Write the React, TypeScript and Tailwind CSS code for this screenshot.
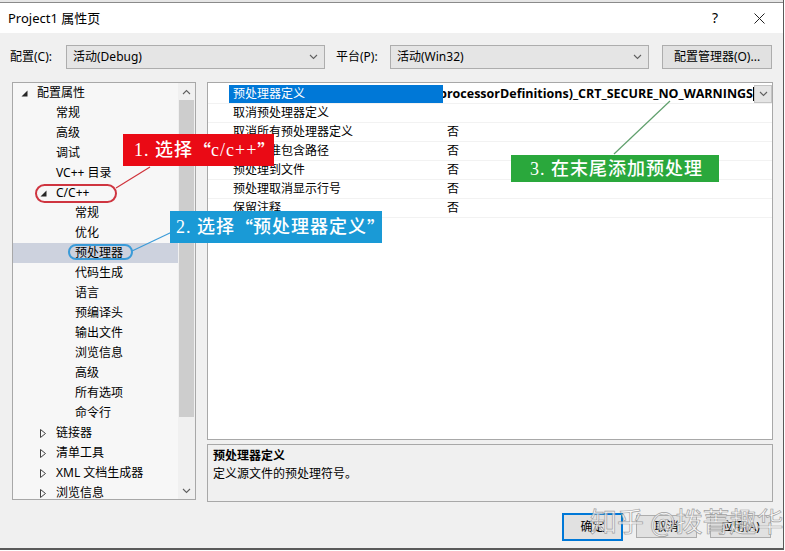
import React from 'react'

type TreeItem = {
  label: string
  level: number
  arrow?: 'open' | 'closed'
  selected?: boolean
}

const treeItems: TreeItem[] = [
  { label: '配置属性', level: 0, arrow: 'open' },
  { label: '常规', level: 1 },
  { label: '高级', level: 1 },
  { label: '调试', level: 1 },
  { label: 'VC++ 目录', level: 1 },
  { label: 'C/C++', level: 1, arrow: 'open' },
  { label: '常规', level: 2 },
  { label: '优化', level: 2 },
  { label: '预处理器', level: 2, selected: true },
  { label: '代码生成', level: 2 },
  { label: '语言', level: 2 },
  { label: '预编译头', level: 2 },
  { label: '输出文件', level: 2 },
  { label: '浏览信息', level: 2 },
  { label: '高级', level: 2 },
  { label: '所有选项', level: 2 },
  { label: '命令行', level: 2 },
  { label: '链接器', level: 1, arrow: 'closed' },
  { label: '清单工具', level: 1, arrow: 'closed' },
  { label: 'XML 文档生成器', level: 1, arrow: 'closed' },
  { label: '浏览信息', level: 1, arrow: 'closed' },
]

const gridRows = [
  { name: '取消预处理器定义', value: '' },
  { name: '取消所有预处理器定义', value: '否' },
  { name: '忽略标准包含路径', value: '否' },
  { name: '预处理到文件', value: '否' },
  { name: '预处理取消显示行号', value: '否' },
  { name: '保留注释', value: '否' },
]

const indent = ['pl-[8px]', 'pl-[27px]', 'pl-[46px]']

const Chevron = ({ up = false }: { up?: boolean }) => (
  <svg width="9" height="6" viewBox="0 0 9 6" className={up ? 'rotate-180' : ''}>
    <path d="M1 1 L4.5 4.5 L8 1" fill="none" stroke="#606060" strokeWidth="1.1" />
  </svg>
)

const TreeArrow = ({ kind }: { kind?: 'open' | 'closed' }) => {
  if (kind === 'open') {
    return (
      <svg width="7" height="7" viewBox="0 0 7 7">
        <path d="M6.5 0.5 L6.5 6.5 L0.5 6.5 Z" fill="#262626" />
      </svg>
    )
  }
  if (kind === 'closed') {
    return (
      <svg width="6" height="9" viewBox="0 0 6 9">
        <path d="M0.5 0.5 L5.5 4.5 L0.5 8.5 Z" fill="none" stroke="#404040" strokeWidth="1" />
      </svg>
    )
  }
  return null
}

const Dropdown = ({ text }: { text: string }) => (
  <div className="flex h-[24px] w-[259px] items-center justify-between border border-[#adadad] bg-[#e5e5e5] pl-[6px] pr-[6px]">
    <span>{text}</span>
    <Chevron />
  </div>
)

// full-width quotes come from the CJK face
const Q = ({ children }: { children: React.ReactNode }) => (
  <span className="font-['Noto_Sans_CJK_SC',sans-serif] tracking-normal">{children}</span>
)

export default function App() {
  return (
    <div className="relative h-[551px] w-[785px] overflow-hidden bg-white font-['Noto_Sans','Noto_Sans_CJK_SC',sans-serif] text-[12px] leading-[16px] text-black">
      <div className="flex h-[550px] w-[784px] flex-col border-r border-b-2 border-[#5a5a5a] bg-[#f0f0f0]">
        <div className="h-[2px] bg-[#e6e6e6]" />

        {/* title bar */}
        <div className="flex h-[31px] items-center border-t border-[#8a8a8a] bg-white pl-[8px] pr-[18px]">
          <span className="text-[13px]">Project1 属性页</span>
          <span className="ml-auto text-[14px]">?</span>
          <svg width="11" height="11" viewBox="0 0 11 11" className="ml-[36px]">
            <path d="M0.5 0.5 L10.5 10.5 M10.5 0.5 L0.5 10.5" stroke="#222" strokeWidth="1" />
          </svg>
        </div>

        {/* config row */}
        <div className="mt-[12px] flex h-[24px] items-center pl-[10px]">
          <span className="w-[56px]">配置(C):</span>
          <Dropdown text="活动(Debug)" />
          <span className="ml-[11px] w-[54px]">平台(P):</span>
          <Dropdown text="活动(Win32)" />
          <button className="ml-[13px] flex h-[24px] w-[110px] items-center justify-center border border-[#adadad] bg-[#e1e1e1]">
            配置管理器(O)...
          </button>
        </div>

        {/* main */}
        <div className="mt-[13px] flex pl-[12px]">
          <div className="flex h-[418px] w-[184px] border border-[#a8a8a8] bg-[#f7f7f7]">
            <div className="flex-1 overflow-hidden">
              {treeItems.map((item, i) => (
                <div
                  key={i}
                  className={`flex h-[20px] items-center whitespace-nowrap ${indent[item.level]} ${item.selected ? 'bg-[#cdd2de]' : ''}`}
                >
                  <span className="flex w-[16px] items-center">
                    <TreeArrow kind={item.arrow} />
                  </span>
                  <span>{item.label}</span>
                </div>
              ))}
            </div>
            <div className="flex w-[17px] flex-col items-center bg-[#f0f0f0]">
              <div className="flex h-[17px] items-center">
                <Chevron up />
              </div>
              <div className="h-[317px] w-[15px] bg-[#cdcdcd]" />
              <div className="flex-1" />
              <div className="flex h-[17px] items-center">
                <Chevron />
              </div>
            </div>
          </div>

          <div className="ml-[11px] flex w-[566px] flex-col">
            <div className="h-[358px] border border-[#a8a8a8] bg-white pt-[2px]">
              <div className="flex h-[19px] border-b border-[#f2f2f2]">
                <div className="w-[21px]" />
                <div className="flex w-[214px] items-center bg-[#0078d7] pl-[4px] text-white">预处理器定义</div>
                <div className="flex flex-1 items-center">
                  <div className="flex w-[311px] items-center justify-end overflow-hidden whitespace-nowrap font-['Open_Sans',sans-serif] text-[12.5px] font-bold">
                    <span>%(PreprocessorDefinitions)_CRT_SECURE_NO_WARNINGS</span>
                    <span className="h-[14px] w-px shrink-0 bg-black" />
                  </div>
                  <div className="flex h-[18px] w-[18px] items-center justify-center border border-[#c4c4c4] bg-[#e5e5e5]">
                    <Chevron />
                  </div>
                </div>
              </div>
              {gridRows.map((row) => (
                <div key={row.name} className="flex h-[19px] border-b border-[#f2f2f2]">
                  <div className="w-[21px]" />
                  <div className="flex w-[214px] items-center pl-[4px]">{row.name}</div>
                  <div className="flex flex-1 items-center pl-[4px]">{row.value}</div>
                </div>
              ))}
            </div>
            <div className="mt-[4px] h-[58px] border border-[#a8a8a8] pl-[5px] pt-[2px] leading-[18px]">
              <div className="font-bold">预处理器定义</div>
              <div>定义源文件的预处理符号。</div>
            </div>
          </div>
        </div>

        {/* buttons */}
        <div className="mt-[11px] flex items-start justify-end gap-[13px] pr-[12px]">
          <button className="flex h-[28px] w-[61px] items-center justify-center border-2 border-[#0078d7] bg-[#e1e1e1]">确定</button>
          <button className="mt-[2px] flex h-[23px] w-[61px] items-center justify-center border border-[#adadad] bg-[#e1e1e1]">取消</button>
          <button className="mt-[2px] flex h-[23px] w-[61px] items-center justify-center border border-[#adadad] bg-[#e1e1e1]">应用(A)</button>
        </div>
      </div>

      {/* annotations */}
      <svg className="pointer-events-none absolute left-0 top-0" width="785" height="551">
        <line x1="116" y1="188" x2="150" y2="167" stroke="#d0343c" strokeWidth="1.2" />
        <line x1="132" y1="251" x2="172" y2="232" stroke="#3b9bd8" strokeWidth="1.2" />
        <line x1="614" y1="154" x2="670" y2="101" stroke="#5f9f6c" strokeWidth="1.2" />
      </svg>
      <div className="pointer-events-none absolute left-[35px] top-[184px] h-[19px] w-[82px] rounded-full border-2 border-[#cf3540]" />
      <div className="pointer-events-none absolute left-[68px] top-[244px] h-[16px] w-[65px] rounded-full border-2 border-[#3b9bd8]" />

      <div className="absolute left-[123px] top-[134px] flex h-[32px] w-[151px] items-center whitespace-nowrap bg-[#ea0a15] pl-[11px] font-['Liberation_Serif','Noto_Sans_CJK_SC',serif] text-[18px] font-medium tracking-[1px] text-white">
        1. 选择<Q>“</Q>c/c++<Q>”</Q>
      </div>
      <div className="absolute left-[170px] top-[211px] flex h-[32px] w-[212px] items-center whitespace-nowrap bg-[#1a9ad6] pl-[6px] font-['Liberation_Serif','Noto_Sans_CJK_SC',serif] text-[18px] font-medium tracking-[1px] text-white">
        2. 选择<Q>“</Q>预处理器定义<Q>”</Q>
      </div>
      <div className="absolute left-[511px] top-[155px] flex h-[27px] w-[208px] items-center whitespace-nowrap bg-[#2aa83c] pl-[19px] font-['Liberation_Serif','Noto_Sans_CJK_SC',serif] text-[18px] font-medium tracking-[1px] text-white">
        3. 在末尾添加预处理
      </div>

      {/* watermark */}
      <div className="pointer-events-none absolute left-[590px] top-[504px] whitespace-nowrap font-['Noto_Sans_CJK_SC',sans-serif] text-[27px] leading-[34px] text-white/70 [-webkit-text-stroke:0.7px_#a0a0a0]">
        知乎 @拨菁趣华
      </div>
    </div>
  )
}
